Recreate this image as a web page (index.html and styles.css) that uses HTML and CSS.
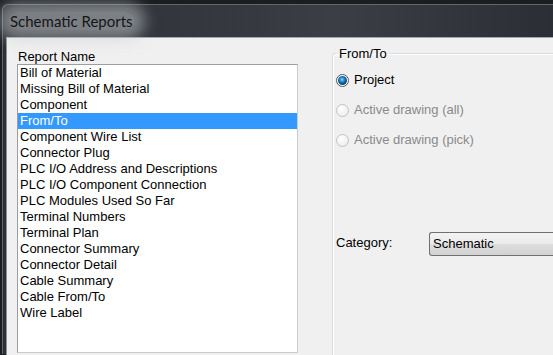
FILE: index.html
```html
<!DOCTYPE html>
<html lang="en">

<head>
    <meta charset="UTF-8">
    <title>Schematic Reports</title>
    <link rel="stylesheet" href="styles.css">
</head>

<body>
    <div class="window">
        <div class="titlebar">
            <span class="caption">Schematic Reports</span>
        </div>

        <div class="client">
            <div class="reports">
                <div class="label">Report Name</div>
                <ul class="listbox">
                    <li>Bill of Material</li>
                    <li>Missing Bill of Material</li>
                    <li>Component</li>
                    <li class="selected">From/To</li>
                    <li>Component Wire List</li>
                    <li>Connector Plug</li>
                    <li>PLC I/O Address and Descriptions</li>
                    <li>PLC I/O Component Connection</li>
                    <li>PLC Modules Used So Far</li>
                    <li>Terminal Numbers</li>
                    <li>Terminal Plan</li>
                    <li>Connector Summary</li>
                    <li>Connector Detail</li>
                    <li>Cable Summary</li>
                    <li>Cable From/To</li>
                    <li>Wire Label</li>
                </ul>
            </div>

            <fieldset class="options">
                <legend>From/To</legend>

                <div class="option">
                    <span class="radio checked"></span>
                    <span>Project</span>
                </div>
                <div class="option disabled">
                    <span class="radio"></span>
                    <span>Active drawing (all)</span>
                </div>
                <div class="option disabled">
                    <span class="radio"></span>
                    <span>Active drawing (pick)</span>
                </div>

                <div class="category">
                    <span class="cat-label">Category:</span>
                    <div class="combo">Schematic</div>
                </div>
            </fieldset>
        </div>
    </div>
</body>

</html>
```

FILE: styles.css
```css
html,
body {
    margin: 0;
    height: 355px;
    overflow: hidden;
}

body {
    background-color: #1b1e21;
    font-family: "Liberation Sans", Arial, sans-serif;
    font-size: 13px;
    color: #000;
}

.window {
    margin: 4px 0 0 2px;
    padding-left: 3px;
    height: 350px;
    box-sizing: border-box;
    border-top: 1px solid #62676d;
    border-left: 1px solid #62676d;
    border-top-left-radius: 6px;
    background: linear-gradient(90deg, #2d3137 0%, #363a40 45%, #3b3f45 60%, #2b2e34 100%);
}

.titlebar {
    height: 32px;
    padding: 7px 0 0 2px;
    box-sizing: border-box;
}

.caption {
    font-family: Lato, "Liberation Sans", sans-serif;
    font-size: 15px;
    line-height: 18px;
    color: #161616;
    display: inline-block;
    padding: 0 2px;
    border-radius: 12px;
    background-color: rgba(200, 203, 207, 0.5);
    box-shadow: 0 0 14px 10px rgba(200, 203, 207, 0.5);
}

.client {
    display: flex;
    height: 318px;
    box-sizing: border-box;
    padding: 8px 0 0 10px;
    background-color: #f0f0f0;
    border-top: 1px solid #a3a8ad;
    border-left: 1px solid #8c9196;
}

.reports {
    width: 281px;
    flex-shrink: 0;
}

.label {
    margin-top: 3px;
    padding-left: 1px;
    line-height: 15px;
}

.listbox {
    list-style: none;
    margin: 0;
    padding: 0;
    width: 281px;
    height: 289px;
    box-sizing: border-box;
    background-color: #fff;
    border: 1px solid #c9cbcd;
    border-top-color: #9a9ea2;
    border-left-color: #9a9ea2;
}

.listbox li {
    height: 16px;
    line-height: 16px;
    padding-left: 2px;
    white-space: nowrap;
}

.listbox .selected {
    background-color: #3399ff;
    color: #fff;
}

.options {
    margin: 0 0 0 34px;
    padding: 0 0 0 3px;
    width: 221px;
    height: 309px;
    box-sizing: border-box;
    flex-shrink: 0;
    border: 1px solid #d5dfe5;
    border-right: none;
    border-bottom: none;
    border-top-left-radius: 3px;
    box-shadow: inset 1px 1px 0 #fff;
}

.options legend {
    margin-left: 1px;
    padding: 0 2px;
    line-height: 15px;
}

.option {
    display: flex;
    align-items: center;
    height: 16px;
    line-height: 16px;
    margin-bottom: 14px;
    gap: 5px;
}

.option:first-of-type {
    margin-top: 11px;
}

.option.disabled {
    color: #8a8a8a;
}

.radio {
    width: 13px;
    height: 13px;
    box-sizing: border-box;
    border-radius: 50%;
    border: 1px solid #c3c3c3;
    background: radial-gradient(circle at 40% 35%, #ffffff 0%, #f1f1f1 60%, #e4e4e4 100%);
    display: flex;
    align-items: center;
    justify-content: center;
}

.radio.checked {
    border-color: #4d5966;
    background: #fff;
}

.radio.checked::after {
    content: "";
    width: 9px;
    height: 9px;
    border-radius: 50%;
    background: radial-gradient(circle at 45% 40%, #9ee6ff 0%, #2f9fdc 22%, #145d97 50%, #0b2e50 85%);
}

.category {
    display: flex;
    align-items: flex-start;
    margin-top: 84px;
}

.cat-label {
    width: 93px;
    margin-top: 3px;
    line-height: 15px;
    flex-shrink: 0;
}

.combo {
    width: 124px;
    height: 24px;
    line-height: 22px;
    box-sizing: border-box;
    padding-left: 3px;
    border: 1px solid #707070;
    border-right: none;
    border-radius: 3px 0 0 3px;
    background: linear-gradient(#f3f3f3 0%, #ebebeb 48%, #dddddd 52%, #d2d2d2 100%);
}
```
